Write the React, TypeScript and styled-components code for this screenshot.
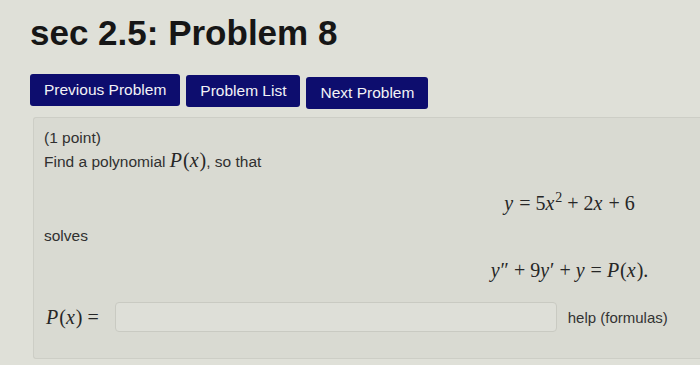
import React from "react";
import styled, { createGlobalStyle } from "styled-components";

const GlobalStyle = createGlobalStyle`
  html, body {
    margin: 0;
    padding: 0;
    background: #dfe0d8;
    overflow: hidden;
  }
  body {
    font-family: "Liberation Sans", Arial, sans-serif;
    color: #2c2c2c;
  }
`;

const Page = styled.div`
  width: 700px;
  height: 365px;
  padding: 13px 0 0 30px;
  box-sizing: border-box;
  overflow: hidden;
`;

const Title = styled.h1`
  margin: 0;
  font-size: 35px;
  font-weight: bold;
  line-height: 40px;
  color: #161616;
`;

const NavBar = styled.div`
  display: flex;
  gap: 6px;
  margin-top: 21px;
`;

const NavButton = styled.button<{ drop?: number }>`
  height: 32px;
  padding: 0 14px;
  margin-top: ${(p) => p.drop || 0}px;
  border: none;
  border-radius: 3px;
  background: #0d0d6e;
  color: #f2f2f6;
  font-family: "Liberation Sans", Arial, sans-serif;
  font-size: 15.5px;
  cursor: pointer;
`;

const Panel = styled.div`
  margin: 8px 0 0 3px;
  height: 242px;
  box-sizing: border-box;
  padding: 9px 10px 0 10px;
  background: #d9dad2;
  border: 1px solid #cdcec6;
  border-right: none;
  border-radius: 3px 0 0 3px;
  font-size: 15.5px;
  color: #303030;
`;

const Line = styled.div<{ space?: number }>`
  line-height: 22px;
  margin-top: ${(p) => p.space || 0}px;
`;

const Display = styled.div<{ space: number }>`
  text-align: center;
  padding-left: 405px;
  margin-top: ${(p) => p.space}px;
  line-height: 26px;
`;

const Math = styled.span`
  font-family: "Liberation Serif", "Times New Roman", serif;
  font-size: 20px;
  color: #262626;
  white-space: nowrap;
`;

const V = styled.i`
  font-style: italic;
  margin-right: 1px;
`;

const Sup = styled.sup`
  font-size: 14px;
  line-height: 0;
`;

const Op = styled.span`
  margin: 0 5px;
`;

const AnswerRow = styled.div`
  display: flex;
  align-items: center;
  margin-top: 17px;
  padding-left: 2px;
`;

const AnswerInput = styled.input`
  width: 442px;
  height: 30px;
  box-sizing: border-box;
  margin-left: 11px;
  border: 1px solid #c9cac2;
  border-radius: 4px;
  background: #dedfd8;
`;

const Help = styled.a`
  margin-left: 11px;
  font-size: 15px;
  color: #333;
  text-decoration: none;
`;

export default function App() {
  return (
    <>
      <GlobalStyle />
      <Page>
        <Title>sec 2.5: Problem 8</Title>
        <NavBar>
          <NavButton>Previous Problem</NavButton>
          <NavButton drop={1}>Problem List</NavButton>
          <NavButton drop={3}>Next Problem</NavButton>
        </NavBar>
        <Panel>
          <Line>(1 point)</Line>
          <Line>
            Find a polynomial{" "}
            <Math>
              <V>P</V>(<V>x</V>)
            </Math>
            , so that
          </Line>
          <Display space={17}>
            <Math>
              <V>y</V>
              <Op>=</Op>5<V>x</V>
              <Sup>2</Sup>
              <Op>+</Op>2<V>x</V>
              <Op>+</Op>6
            </Math>
          </Display>
          <Line space={7}>solves</Line>
          <Display space={10}>
            <Math>
              <V>y</V>″<Op>+</Op>9<V>y</V>′<Op>+</Op>
              <V>y</V>
              <Op>=</Op>
              <V>P</V>(<V>x</V>).
            </Math>
          </Display>
          <AnswerRow>
            <Math>
              <V>P</V>(<V>x</V>)<Op>=</Op>
            </Math>
            <AnswerInput />
            <Help href="#">help (formulas)</Help>
          </AnswerRow>
        </Panel>
      </Page>
    </>
  );
}
